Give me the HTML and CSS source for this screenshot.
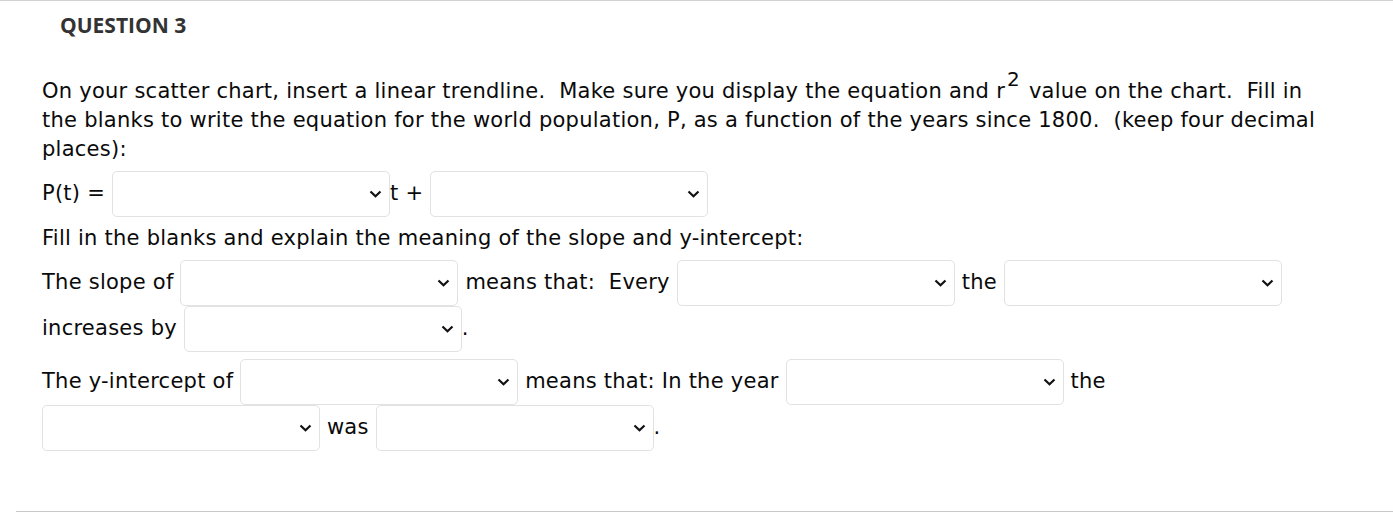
FILE: index.html
```html
<!DOCTYPE html>
<html>
<head>
<meta charset="utf-8">
<link rel="stylesheet" href="styles.css">
</head>
<body>
<div class="page">
  <div class="header"><h2 class="title">QUESTION 3</h2></div>
  <div class="content">
    <p class="para">On your scatter chart, insert a linear trendline.&nbsp; Make sure you display the equation and r<sup class="sup">2</sup> value on the chart.&nbsp; Fill in the blanks to write the equation for the world population, P, as a function of the years since 1800.&nbsp; (keep four decimal places):</p>
    <p class="para">P(t) = <span class="sel"><svg class="chev" width="13" height="8" viewBox="0 0 13 8"><polyline points="1.5,1.5 6.5,6.2 11.5,1.5" fill="none" stroke="#111" stroke-width="2.2"/></svg></span>t + <span class="sel"><svg class="chev" width="13" height="8" viewBox="0 0 13 8"><polyline points="1.5,1.5 6.5,6.2 11.5,1.5" fill="none" stroke="#111" stroke-width="2.2"/></svg></span></p>
    <p class="para">Fill in the blanks and explain the meaning of the slope and y-intercept:</p>
    <p class="para">The slope of <span class="sel"><svg class="chev" width="13" height="8" viewBox="0 0 13 8"><polyline points="1.5,1.5 6.5,6.2 11.5,1.5" fill="none" stroke="#111" stroke-width="2.2"/></svg></span> means that:&nbsp; Every <span class="sel"><svg class="chev" width="13" height="8" viewBox="0 0 13 8"><polyline points="1.5,1.5 6.5,6.2 11.5,1.5" fill="none" stroke="#111" stroke-width="2.2"/></svg></span> the <span class="sel"><svg class="chev" width="13" height="8" viewBox="0 0 13 8"><polyline points="1.5,1.5 6.5,6.2 11.5,1.5" fill="none" stroke="#111" stroke-width="2.2"/></svg></span> increases by <span class="sel"><svg class="chev" width="13" height="8" viewBox="0 0 13 8"><polyline points="1.5,1.5 6.5,6.2 11.5,1.5" fill="none" stroke="#111" stroke-width="2.2"/></svg></span>.</p>
    <p class="para">The y-intercept of <span class="sel"><svg class="chev" width="13" height="8" viewBox="0 0 13 8"><polyline points="1.5,1.5 6.5,6.2 11.5,1.5" fill="none" stroke="#111" stroke-width="2.2"/></svg></span> means that: In the year <span class="sel"><svg class="chev" width="13" height="8" viewBox="0 0 13 8"><polyline points="1.5,1.5 6.5,6.2 11.5,1.5" fill="none" stroke="#111" stroke-width="2.2"/></svg></span> the <span class="sel"><svg class="chev" width="13" height="8" viewBox="0 0 13 8"><polyline points="1.5,1.5 6.5,6.2 11.5,1.5" fill="none" stroke="#111" stroke-width="2.2"/></svg></span> was <span class="sel"><svg class="chev" width="13" height="8" viewBox="0 0 13 8"><polyline points="1.5,1.5 6.5,6.2 11.5,1.5" fill="none" stroke="#111" stroke-width="2.2"/></svg></span>.</p>
  </div>
  <div class="footer"></div>
</div>
</body>
</html>
```
FILE: styles.css
```css
html, body {
  margin: 0;
  padding: 0;
  background: #fff;
}
.page {
  border-top: 1px solid #d2d2d2;
}
.header {
  padding: 10px 60px 0 60px;
}
.title {
  margin: 0;
  font-family: "Open Sans", sans-serif;
  font-weight: 700;
  font-size: 21px;
  line-height: 28px;
  color: #333;
}
.content {
  padding: 38px 70px 0 42px;
  font-family: "DejaVu Sans", sans-serif;
  font-size: 21px;
  line-height: 29px;
  letter-spacing: 0.25px;
  color: #0a0a0a;
}
.para {
  margin: 0 0 7px 0;
}
.sup {
  font-size: 0.95em;
  line-height: 0;
  vertical-align: 0.6em;
  padding: 0 2px 0 2px;
}
.sel {
  display: inline-flex;
  justify-content: flex-end;
  align-items: center;
  box-sizing: border-box;
  width: 278px;
  height: 46px;
  border: 1px solid #e2e2e2;
  border-radius: 5px;
  padding-right: 7px;
  vertical-align: middle;
  background: #fff;
}
.chev {
  display: block;
}
.footer {
  margin: 60px 0 0 16px;
  border-top: 1px solid #c8c8c8;
}
```
